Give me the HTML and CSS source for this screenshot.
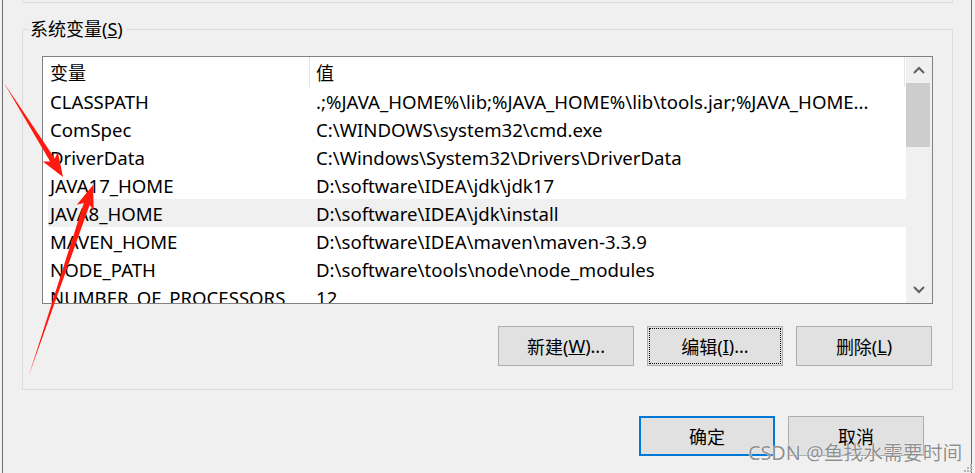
FILE: index.html
```html
<!DOCTYPE html>
<html lang="zh-CN">
<head>
<meta charset="utf-8">
<title>系统变量</title>
<link rel="stylesheet" href="styles.css">
</head>
<body>
<div class="window">
  <div class="user-group"></div>
  <fieldset class="sys-group">
    <legend>系统变量(<u>S</u>)</legend>
    <div class="sys-body">
      <div class="list">
        <div class="list-body">
          <div class="list-header">
            <div class="hcol hcol-name">变量</div>
            <div class="hcol hcol-value">值</div>
          </div>
          <div class="row"><span>CLASSPATH</span><span>.;%JAVA_HOME%\lib;%JAVA_HOME%\lib\tools.jar;%JAVA_HOME...</span></div>
          <div class="row"><span>ComSpec</span><span>C:\WINDOWS\system32\cmd.exe</span></div>
          <div class="row"><span>DriverData</span><span>C:\Windows\System32\Drivers\DriverData</span></div>
          <div class="row"><span>JAVA17_HOME</span><span>D:\software\IDEA\jdk\jdk17</span></div>
          <div class="row hl"><span>JAVA8_HOME</span><span>D:\software\IDEA\jdk\install</span></div>
          <div class="row"><span>MAVEN_HOME</span><span>D:\software\IDEA\maven\maven-3.3.9</span></div>
          <div class="row"><span>NODE_PATH</span><span>D:\software\tools\node\node_modules</span></div>
          <div class="row"><span>NUMBER_OF_PROCESSORS</span><span>12</span></div>
        </div>
        <div class="vscroll">
          <div class="sb-btn"><svg width="12" height="8" viewBox="0 0 12 8"><polyline points="1,7 6,2 11,7" fill="none" stroke="#606060" stroke-width="2"/></svg></div>
          <div class="sb-track"><div class="sb-thumb"></div></div>
          <div class="sb-btn"><svg width="12" height="8" viewBox="0 0 12 8"><polyline points="1,1 6,6 11,1" fill="none" stroke="#606060" stroke-width="2"/></svg></div>
        </div>
      </div>
      <div class="btn-row">
        <button class="btn">新建(<u>W</u>)...</button>
        <button class="btn focused">编辑(<u>I</u>)...</button>
        <button class="btn">删除(<u>L</u>)</button>
      </div>
    </div>
  </fieldset>
  <div class="dialog-buttons">
    <button class="btn default">确定</button>
    <button class="btn">取消</button>
  </div>
</div>
<svg class="arrows" width="975" height="473" viewBox="0 0 975 473">
  <polygon points="4,83 54.8,158.6 57.8,151.8 63,177 42.8,161.6 50.1,161.6" fill="#ff1a0f"/>
  <polygon points="29,375 89.6,205.1 93.8,210.6 93,185 76.8,204.8 83.8,203" fill="#ff1a0f"/>
</svg>
<div class="watermark">CSDN @鱼找水需要时间</div>
<svg class="grip" width="10" height="10" viewBox="0 0 10 10">
  <rect x="7" y="1" width="2" height="2" fill="#b5b5b5"/>
  <rect x="4" y="4" width="2" height="2" fill="#b5b5b5"/>
  <rect x="7" y="4" width="2" height="2" fill="#b5b5b5"/>
  <rect x="1" y="7" width="2" height="2" fill="#b5b5b5"/>
  <rect x="4" y="7" width="2" height="2" fill="#b5b5b5"/>
  <rect x="7" y="7" width="2" height="2" fill="#b5b5b5"/>
</svg>
</body>
</html>
```
FILE: styles.css
```css
html, body {
  margin: 0;
  padding: 0;
}
body {
  background: #f0f0f0;
  font-family: "Noto Sans", "Noto Sans CJK SC", sans-serif;
  font-size: 18.6px;
  color: #000;
  width: 975px;
  height: 473px;
  overflow: hidden;
  position: relative;
}
.window {
  margin-left: 2px;
  width: 931px;
  height: 473px;
  padding: 0 18px 0 19px;
  border-left: 1px solid #6d6d6d;
  border-right: 1px solid #6d6d6d;
  display: flex;
  flex-direction: column;
}
.user-group {
  height: 2px;
  border: 1px solid #dcdcdc;
  border-top: none;
}
.sys-group {
  margin: 15px 0 0;
  padding: 0;
  border: 1px solid #dcdcdc;
  min-width: 0;
}
.sys-group legend {
  margin-left: 6px;
  padding: 0 4px 0 1px;
  line-height: 22px;
  font-size: 18px;
}
.sys-body {
  padding: 16px 19px 23px;
}
.list {
  height: 246px;
  border: 1px solid #828282;
  background: #fff;
  display: flex;
}
.list-body {
  flex: 1;
  min-width: 0;
  overflow: hidden;
}
.list-header {
  height: 30px;
  display: flex;
  font-size: 18px;
}
.hcol {
  box-sizing: border-box;
  border-right: 1px solid #e5e5e5;
  display: flex;
  align-items: center;
}
.hcol-name {
  width: 267px;
  padding-left: 7px;
}
.hcol-value {
  width: 595px;
  padding-left: 6px;
}
.row {
  height: 28px;
  margin-left: 5px;
  display: grid;
  grid-template-columns: 268px 1fr;
  align-items: center;
  white-space: nowrap;
  overflow: hidden;
}
.row > span:first-child {
  padding-left: 2px;
}
.row.hl {
  background: #f0f0f0;
}
.vscroll {
  width: 26px;
  background: #f0f0f0;
  display: flex;
  flex-direction: column;
}
.sb-btn {
  height: 26px;
  display: flex;
  align-items: center;
  justify-content: center;
}
.sb-track {
  flex: 1;
}
.sb-thumb {
  width: 24px;
  height: 64px;
  background: #cdcdcd;
}
.btn {
  width: 136px;
  height: 40px;
  box-sizing: border-box;
  border: 1px solid #adadad;
  background: #e1e1e1;
  font-family: inherit;
  font-size: 18px;
  color: #000;
  padding: 0;
  margin: 0;
  display: flex;
  align-items: center;
  justify-content: center;
}
.btn.focused {
  outline: 1px dotted #000;
  outline-offset: -3px;
}
.btn.default {
  border: 2px solid #0078d7;
}
.btn-row {
  display: flex;
  justify-content: flex-end;
  gap: 13px;
  margin-top: 22px;
  padding-right: 1px;
}
.dialog-buttons {
  display: flex;
  justify-content: flex-end;
  gap: 13px;
  margin-top: 26px;
  padding-right: 29px;
}
.arrows {
  position: absolute;
  left: 0;
  top: 0;
  pointer-events: none;
}
.watermark {
  position: absolute;
  left: 748px;
  top: 439px;
  font-size: 19.8px;
  line-height: 28px;
  color: rgba(105, 105, 105, 0.75);
  text-shadow: 0 0 1px #fff, 0 0 1px #fff;
  white-space: nowrap;
}
.grip {
  position: absolute;
  right: 2px;
  bottom: 0;
}
```
